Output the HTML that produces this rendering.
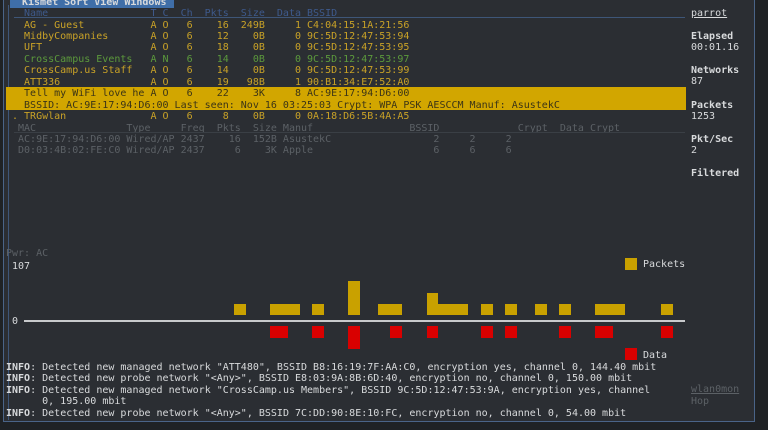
<!DOCTYPE html>
<html><head><meta charset="utf-8"><style>
html,body{margin:0;padding:0;width:768px;height:430px;overflow:hidden;background:#1f2225}
#win{position:absolute;left:0;top:0;width:768px;height:430px;background:#1f2225}
#frame{position:absolute;left:3px;top:0;width:750px;height:421px;background:#2b2e33;border:1px solid #4a6488;border-top:none}
#frame2{position:absolute;left:8px;top:5px;width:741px;height:415px;border-left:1px solid #3e5678}
.t{position:absolute;font-family:"DejaVu Sans Mono","Liberation Mono",monospace;font-size:10px;line-height:11.45px;white-space:pre;margin:0}
.y{color:#c9a227}.g{color:#5c9a3c}.h{color:#3e5a8c}.c{color:#5c6166}.w{color:#d8dadc}
.b{font-weight:bold}
.bar{position:absolute}
.p{background:#c9a100}.d{background:#d90000}
</style></head><body><div id="win">
<div id="frame"></div><div id="frame2"></div>
<div style="position:absolute;left:10px;top:0;width:164px;height:8px;background:#3f6ea8;overflow:hidden"><div class="t w b" style="left:12px;top:-3.5px;">Kismet Sort View Windows</div></div>
<div style="position:absolute;left:14px;top:17px;width:671px;height:1px;background:#3e5678"></div>
<div class="t h" style="left:12px;top:7.5px;">  Name                 T C  Ch  Pkts  Size  Data BSSID</div>
<div class="t y" style="left:12px;top:19.5px;">  AG - Guest           A O   6    16  249B     1 C4:04:15:1A:21:56
  MidbyCompanies       A O   6    12    0B     0 9C:5D:12:47:53:94
  UFT                  A O   6    18    0B     0 9C:5D:12:47:53:95</div>
<div class="t g" style="left:12px;top:53.85px;">  CrossCampus Events   A N   6    14    0B     0 9C:5D:12:47:53:97</div>
<div class="t y" style="left:12px;top:65.3px;">  CrossCamp.us Staff   A O   6    14    0B     0 9C:5D:12:47:53:99
  ATT336               A O   6    19   98B     1 90:B1:34:E7:52:A0</div>
<div style="position:absolute;left:6px;top:87px;width:680px;height:23px;background:#d2a600"></div>
<div class="t" style="left:12px;top:88.2px;color:#3b3416;">  Tell my WiFi love he A O   6    22    3K     8 AC:9E:17:94:D6:00
  BSSID: AC:9E:17:94:D6:00 Last seen: Nov 16 03:25:03 Crypt: WPA PSK AESCCM Manuf: AsustekC</div>
<div class="t y" style="left:12px;top:111.1px;">. TRGwlan              A O   6     8    0B     0 0A:18:D6:5B:4A:A5</div>
<div class="t c" style="left:12px;top:122.5px;"> MAC               Type     Freq  Pkts  Size Manuf                BSSID             Crypt  Data Crypt</div>
<div style="position:absolute;left:14px;top:132px;width:671px;height:1px;background:#3a3f45"></div>
<div class="t c" style="left:12px;top:134px;"> AC:9E:17:94:D6:00 Wired/AP 2437    16  152B AsustekC                 2     2     2
 D0:03:4B:02:FE:C0 Wired/AP 2437     6    3K Apple                    6     6     6</div>
<div class="t w" style="left:691px;top:7.5px;text-decoration:underline;">parrot</div>
<div class="t w" style="left:691px;top:30.5px;"><b>Elapsed</b>
00:01.16</div>
<div class="t w" style="left:691px;top:64.5px;"><b>Networks</b>
87</div>
<div class="t w" style="left:691px;top:99.5px;"><b>Packets</b>
1253</div>
<div class="t w" style="left:691px;top:133.5px;"><b>Pkt/Sec</b>
2</div>
<div class="t w" style="left:691px;top:167.5px;"><b>Filtered</b></div>
<div class="t c" style="left:6px;top:247.5px;">Pwr: AC</div>
<div class="t w" style="left:12px;top:260.5px;">107</div>
<div class="t w" style="left:12px;top:316px;">0</div>
<div style="position:absolute;left:24px;top:320px;width:661px;height:2px;background:#c8cacc"></div>
<div class="bar p" style="left:625px;top:258px;width:12px;height:12px"></div>
<div class="t w" style="left:643px;top:259px;">Packets</div>
<div class="bar d" style="left:625px;top:348px;width:12px;height:12px"></div>
<div class="t w" style="left:643px;top:350px;">Data</div>
<div class="bar p" style="left:234px;top:304px;width:12px;height:11px"></div>
<div class="bar p" style="left:270px;top:304px;width:30px;height:11px"></div>
<div class="bar p" style="left:312px;top:304px;width:12px;height:11px"></div>
<div class="bar p" style="left:348px;top:281px;width:12px;height:34px"></div>
<div class="bar p" style="left:378px;top:304px;width:24px;height:11px"></div>
<div class="bar p" style="left:427px;top:293px;width:11px;height:22px"></div>
<div class="bar p" style="left:438px;top:304px;width:30px;height:11px"></div>
<div class="bar p" style="left:481px;top:304px;width:12px;height:11px"></div>
<div class="bar p" style="left:505px;top:304px;width:12px;height:11px"></div>
<div class="bar p" style="left:535px;top:304px;width:12px;height:11px"></div>
<div class="bar p" style="left:559px;top:304px;width:12px;height:11px"></div>
<div class="bar p" style="left:595px;top:304px;width:30px;height:11px"></div>
<div class="bar p" style="left:661px;top:304px;width:12px;height:11px"></div>
<div class="bar d" style="left:270px;top:326px;width:18px;height:12px"></div>
<div class="bar d" style="left:312px;top:326px;width:12px;height:12px"></div>
<div class="bar d" style="left:348px;top:326px;width:12px;height:23px"></div>
<div class="bar d" style="left:390px;top:326px;width:12px;height:12px"></div>
<div class="bar d" style="left:427px;top:326px;width:11px;height:12px"></div>
<div class="bar d" style="left:481px;top:326px;width:12px;height:12px"></div>
<div class="bar d" style="left:505px;top:326px;width:12px;height:12px"></div>
<div class="bar d" style="left:559px;top:326px;width:12px;height:12px"></div>
<div class="bar d" style="left:595px;top:326px;width:18px;height:12px"></div>
<div class="bar d" style="left:661px;top:326px;width:12px;height:12px"></div>
<div class="t w" style="left:6px;top:362px;"><b>INFO</b>: Detected new managed network "ATT480", BSSID B8:16:19:7F:AA:C0, encryption yes, channel 0, 144.40 mbit
<b>INFO</b>: Detected new probe network "&lt;Any&gt;", BSSID E8:03:9A:8B:6D:40, encryption no, channel 0, 150.00 mbit
<b>INFO</b>: Detected new managed network "CrossCamp.us Members", BSSID 9C:5D:12:47:53:9A, encryption yes, channel
      0, 195.00 mbit
<b>INFO</b>: Detected new probe network "&lt;Any&gt;", BSSID 7C:DD:90:8E:10:FC, encryption no, channel 0, 54.00 mbit</div>
<div class="t c" style="left:691px;top:384px;text-decoration:underline;">wlan0mon</div>
<div class="t c" style="left:691px;top:395.5px;">Hop</div>
</div></body></html>
